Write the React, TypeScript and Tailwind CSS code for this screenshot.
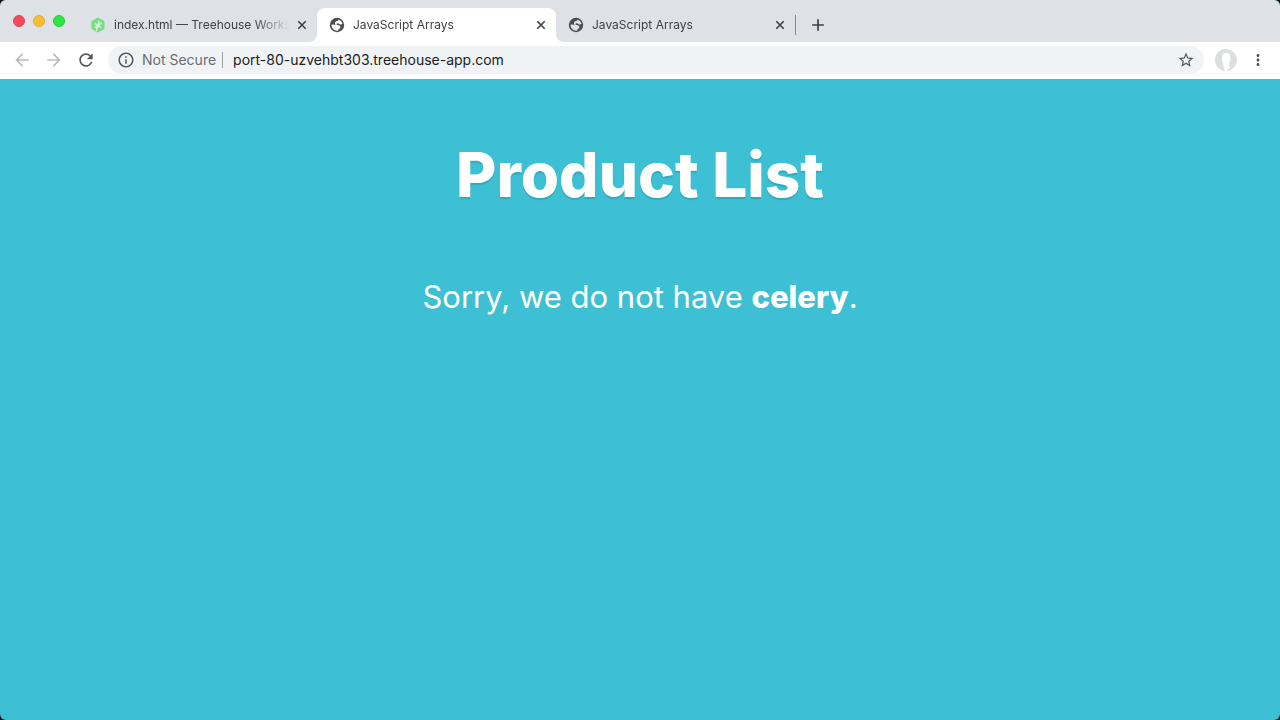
import {
  MdAdd,
  MdArrowBack,
  MdArrowForward,
  MdInfoOutline,
  MdMoreVert,
  MdRefresh,
  MdStarBorder,
} from "react-icons/md"

const tabs = [
  { id: 1, title: "index.html — Treehouse Works", icon: "treehouse", active: false },
  { id: 2, title: "JavaScript Arrays", icon: "globe", active: true },
  { id: 3, title: "JavaScript Arrays", icon: "globe", active: false },
]

function TreehouseIcon() {
  return (
    <svg viewBox="0 0 16 16" className="w-4 h-4 shrink-0" aria-hidden="true">
      <path
        d="M7 .9a2 2 0 0 1 2 0l4.600 2.600a2 2 0 0 1 1 1.700v5.600a2 2 0 0 1-1 1.700L9 15.100a2 2 0 0 1-2 0l-4.600-2.600a2 2 0 0 1-1-1.700V5.200a2 2 0 0 1 1-1.700z"
        fill="#76df83"
      />
      <path
        d="M6.500 13.500 7.600 9M7.800 9 5.200 10.300M7.600 8.600 5.200 6.800M8 8.300 9 4.200M8.200 8.500 11.300 6.200M8.200 9l2.600 1.400"
        fill="none"
        stroke="#d5f0da"
        strokeWidth="1.500"
        strokeLinecap="round"
      />
    </svg>
  )
}

function GlobeIcon({ land }: { land: string }) {
  return (
    <svg viewBox="0 0 16 16" className="w-4 h-4 shrink-0" aria-hidden="true">
      <circle cx="8" cy="8" r="7.200" fill="#4b4e52" />
      <path
        d="M9.600 2.700c2 .6 3.500 2.100 4 4-.8.700-1.900.9-2.900.5-.6-.3-.8-.8-1.600-.9-.8-.1-1.500.1-1.600.8-.1.700.5.900 1.300 1 1.700.1 2.700.9 2.600 2.100-.1 1-.8 1.300-1.500 1.700-.5.400-.5 1-.8 1.800-3.600.3-6.500-2.300-6.600-6 1.600-.3 3.200-.2 4.300.6-.8-1-1.200-2.400-.5-3.300.6-.7 1.400-.6 2.100-.9.6-.3.900-.7 1.200-1.400z"
        fill={land}
      />
    </svg>
  )
}

function CloseIcon() {
  return (
    <svg viewBox="0 0 16 16" className="w-4 h-4" aria-hidden="true">
      <path d="M4.300 4.300l7.400 7.400M11.700 4.300l-7.400 7.400" stroke="currentColor" strokeWidth="1.600" />
    </svg>
  )
}

// curved foot on either side of the selected tab
function TabFoot({ className }: { className: string }) {
  return (
    <svg viewBox="0 0 8 8" className={`absolute bottom-0 w-2 h-2 ${className}`} aria-hidden="true">
      <path d="M8 0v8H0a8 8 0 0 0 8-8z" fill="#ffffff" />
    </svg>
  )
}

function Tab({ title, icon, active }: { title: string; icon: string; active: boolean }) {
  return (
    <div
      role="tab"
      aria-selected={active}
      className={`relative flex items-center w-[239px] h-full pl-3 pr-[7px] ${active ? "bg-white rounded-t-lg" : ""}`}
    >
      {active && <TabFoot className="-left-2" />}
      {icon === "globe" ? <GlobeIcon land={active ? "#ffffff" : "#dee1e6"} /> : <TreehouseIcon />}
      <span className="flex-1 min-w-0 ml-2 mr-1 whitespace-nowrap text-xs text-[#3f4144] [mask-image:linear-gradient(to_right,black_80%,transparent)]">
        {title}
      </span>
      <button type="button" aria-label="Close tab" className="text-[#3c4043]">
        <CloseIcon />
      </button>
      {active && <TabFoot className="-right-2 -scale-x-100" />}
    </div>
  )
}

export default function App() {
  return (
    <div className="min-h-screen flex bg-[#111418] font-[Inter,sans-serif]">
      <div className="flex-1 min-w-0 flex flex-col rounded-md overflow-hidden bg-[#3dbfd4]">
        <div className="flex items-center h-[42px] bg-[#dee1e6]">
          <div className="flex gap-2 px-[13px]">
            <button type="button" aria-label="Close window" className="w-3 h-3 rounded-full bg-[#f2495c] border border-[#dc4355]" />
            <button type="button" aria-label="Minimize window" className="w-3 h-3 rounded-full bg-[#fbbd30] border border-[#e0a835]" />
            <button type="button" aria-label="Zoom window" className="w-3 h-3 rounded-full bg-[#2fe643] border border-[#2bc83d]" />
          </div>
          <div role="tablist" className="flex h-full pt-2">
            {tabs.map((tab) => (
              <Tab key={tab.id} title={tab.title} icon={tab.icon} active={tab.active} />
            ))}
          </div>
          <div className="flex items-center h-full pt-2">
            <div className="w-px h-5 bg-[#85888c]" />
            <button type="button" aria-label="New tab" className="flex items-center justify-center w-11 h-7 text-[#3c4043]">
              <MdAdd className="w-5 h-5" />
            </button>
          </div>
        </div>

        <div className="flex items-center h-[37px] px-1.5 pb-px bg-white">
          <button type="button" aria-label="Back" className="flex justify-center w-8 text-[#b9bbbe]">
            <MdArrowBack className="w-5 h-5" />
          </button>
          <button type="button" aria-label="Forward" className="flex justify-center w-8 text-[#b9bbbe]">
            <MdArrowForward className="w-5 h-5" />
          </button>
          <button type="button" aria-label="Reload" className="flex justify-center w-8 text-[#54575b]">
            <MdRefresh className="w-5 h-5" />
          </button>
          <div className="flex flex-1 items-center h-7 mx-1.5 px-[9px] rounded-full bg-[#f0f3f4]">
            <MdInfoOutline className="w-[18px] h-[18px] shrink-0 text-[#54575b]" />
            <span className="ml-[7px] whitespace-nowrap text-sm text-[#6a6d71]">Not Secure</span>
            <div className="w-px h-4 ml-1.5 mr-2.5 bg-[#9a9da1]" />
            <input
              type="text"
              aria-label="Address"
              defaultValue="port-80-uzvehbt303.treehouse-app.com"
              className="flex-1 min-w-0 bg-transparent outline-none text-sm text-[#202124]"
            />
            <button type="button" aria-label="Bookmark this page" className="text-[#54575b]">
              <MdStarBorder className="w-[18px] h-[18px]" />
            </button>
          </div>
          <button type="button" aria-label="Profile" className="flex justify-center w-8">
            <svg viewBox="0 0 22 22" className="w-[22px] h-[22px]" aria-hidden="true">
              <circle cx="11" cy="11" r="11" fill="#dcdfe0" />
              <path d="M11.200 4c2.900 0 4.200 1.900 4.200 4.800 0 2.700-.5 4.700-1.600 6.200 0 1.600.2 2.900 1.700 3.700L13 20l-1.200 2h-1.600L9 19.300c-.6-1-.5-2.900-.6-4.300C7.300 13.500 6.800 11.500 6.800 8.800 6.800 5.900 8.300 4 11.200 4z" fill="#ffffff" />
            </svg>
          </button>
          <button type="button" aria-label="Menu" className="flex justify-center w-8 text-[#54575b]">
            <MdMoreVert className="w-[18px] h-[18px]" />
          </button>
        </div>

        <main className="flex-1 px-8 pt-14 text-center text-white">
          <h1 className="text-[62px] leading-[80px] font-extrabold [text-shadow:0_2px_1px_rgba(0,0,0,0.12)]">Product List</h1>
          <p className="mt-[58px] text-[31px] leading-[48px]">
            Sorry, we do not have <strong className="font-extrabold">celery</strong>.
          </p>
        </main>
      </div>
    </div>
  )
}
